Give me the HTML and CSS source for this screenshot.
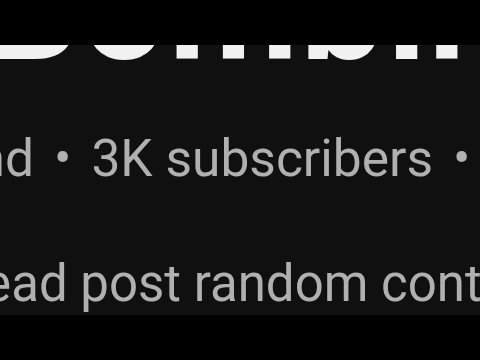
FILE: index.html
```html
<!DOCTYPE html>
<html lang="en">
<head>
<meta charset="utf-8">
<title>Channel header</title>
<link rel="stylesheet" href="styles.css">
</head>
<body>
  <main class="frame">
    <h1 class="title">Bombinho</h1>
    <div class="meta">
      <span class="handle"><span>@bombiland</span></span>
      <span class="sep">•</span>
      <span>3K subscribers</span>
      <span class="sep">•</span>
      <span>120 videos</span>
    </div>
    <p class="desc">I instead post random content here</p>
  </main>
</body>
</html>
```

FILE: styles.css
```css
html, body {
  margin: 0;
  padding: 0;
  background: #000;
  width: 480px;
  height: 360px;
  overflow: hidden;
}

body {
  display: flex;
  flex-direction: column;
  justify-content: center;
}

.frame {
  height: 270px;
  background: #101010;
  overflow: hidden;
  font-family: Roboto, "Noto Sans", sans-serif;
  color: #b0b0b0;
}

.title {
  margin: -112px 0 0 -16px;
  font-size: 150px;
  line-height: 150px;
  font-weight: 700;
  color: #f1f1f1;
  white-space: nowrap;
  letter-spacing: 2px;
}

.meta {
  display: flex;
  margin-top: 40px;
  height: 72px;
  line-height: 72px;
  font-size: 51.5px;
  white-space: nowrap;
}

.handle {
  flex: 0 0 34px;
  display: flex;
  justify-content: flex-end;
  overflow: hidden;
}

.sep {
  padding: 0 20px;
}

.desc {
  margin: 53px 0 0;
  height: 72px;
  line-height: 72px;
  font-size: 51px;
  white-space: nowrap;
  text-indent: -126px;
}
```
